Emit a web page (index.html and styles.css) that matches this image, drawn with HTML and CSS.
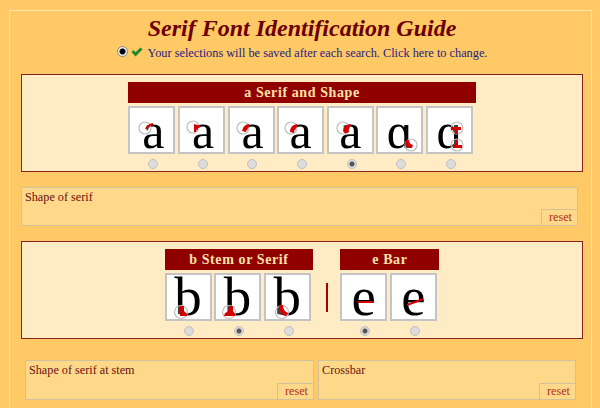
FILE: index.html
```html
<!DOCTYPE html>
<html lang="en">
<head>
    <meta charset="UTF-8" />
    <title>Serif Font Identification Guide</title>
    <link rel="stylesheet" href="styles.css">
</head>
<body>
    <div class="page">
        <h1 class="title">Serif Font Identification Guide</h1>
        <div class="saved">
            <input type="radio" class="saveRadio" checked>
            <svg class="check" viewBox="0 0 12 10"><path d="M0.5 5 L2.5 3 L4.5 5.2 L9.5 0.5 L11.5 2.5 L4.5 9.5 Z" fill="#1f8a2a"/></svg>
            <a href="#">Your selections will be saved after each search. Click here to change.</a>
        </div>

        <div class="panel">
            <div class="group">
                <div class="groupHead">a Serif and Shape</div>
                <div class="options">
                    <label class="option">
                        <span class="thumb nudge">a
                            <svg viewBox="0 0 47 50"><circle cx="17" cy="23" r="6"/><path class="mark" d="M18 24 Q20 20 25 19" /></svg>
                        </span>
                        <input type="radio" name="a">
                    </label>
                    <label class="option">
                        <span class="thumb nudge">a
                            <svg viewBox="0 0 47 50"><circle cx="15" cy="22" r="6"/><path class="fill" d="M16 19 L23 21 L21 23 L19 23 L18 27 L16 27 Z"/></svg>
                        </span>
                        <input type="radio" name="a">
                    </label>
                    <label class="option">
                        <span class="thumb nudge">a
                            <svg viewBox="0 0 47 50"><circle cx="15" cy="23" r="6"/><path class="fill" d="M14 26 Q15 20 21 19 L22 22 Q19 22 18 27 Z"/></svg>
                        </span>
                        <input type="radio" name="a">
                    </label>
                    <label class="option">
                        <span class="thumb">a
                            <svg viewBox="0 0 47 50"><circle cx="14" cy="23" r="6"/><path class="fill" d="M13 27 Q13 20 20 19 L21 22 Q17 22 17 28 Z"/></svg>
                        </span>
                        <input type="radio" name="a">
                    </label>
                    <label class="option">
                        <span class="thumb">a
                            <svg viewBox="0 0 47 50"><circle cx="16" cy="23" r="6"/><path class="fill" d="M16 26 Q16 21 23 19 L24 21 Q21 23 22 27 Q18 30 16 26 Z"/></svg>
                        </span>
                        <input type="radio" name="a" checked>
                    </label>
                    <label class="option">
                        <span class="thumb">&#593;
                            <svg viewBox="0 0 47 50"><circle cx="35" cy="40" r="6"/><path class="fill" d="M30 35 L33 35 Q33 39 37 40 L36 43 Q30 43 29 39 Z"/></svg>
                        </span>
                        <input type="radio" name="a">
                    </label>
                    <label class="option">
                        <span class="thumb">&#593;
                            <svg viewBox="0 0 47 50"><circle cx="31" cy="23" r="6"/><circle cx="31" cy="40" r="6"/><path class="fill" d="M25 22 L35 22 L35 25 L32 25 L32 29 L29 29 L29 25 L25 25 Z M29 35 L32 35 L32 40 L36 40 L36 43 L27 43 L27 40 L29 40 Z"/></svg>
                        </span>
                        <input type="radio" name="a">
                    </label>
                </div>
            </div>
        </div>

        <div class="notes">
            <div class="note">Shape of serif<a class="reset" href="#">reset</a></div>
        </div>

        <div class="panel">
            <div class="group">
                <div class="groupHead">b Stem or Serif</div>
                <div class="options">
                    <label class="option">
                        <span class="thumb tall">b
                            <svg viewBox="0 0 47 50"><circle cx="16" cy="39" r="6.5"/><path class="fill" d="M15 33 L19 33 L19 38 L22 41 L22 43 L15 43 Z"/></svg>
                        </span>
                        <input type="radio" name="b">
                    </label>
                    <label class="option">
                        <span class="thumb tall">b
                            <svg viewBox="0 0 47 50"><circle cx="15" cy="39" r="6.5"/><path class="fill" d="M15 33 L19 33 L19 38 L21 41 L21 43 L10 43 L11 40 Q15 39 15 33 Z"/></svg>
                        </span>
                        <input type="radio" name="b" checked>
                    </label>
                    <label class="option">
                        <span class="thumb tall">b
                            <svg viewBox="0 0 47 50"><circle cx="18" cy="39" r="6.5"/><path class="fill" d="M15 32 L19 32 Q19 38 24 40 L22 43 Q15 42 15 32 Z"/></svg>
                        </span>
                        <input type="radio" name="b">
                    </label>
                </div>
            </div>
            <div class="divider"></div>
            <div class="group">
                <div class="groupHead">e Bar</div>
                <div class="options">
                    <label class="option">
                        <span class="thumb tall">e
                            <svg viewBox="0 0 47 50"><path class="line" d="M18 29 L34 29"/></svg>
                        </span>
                        <input type="radio" name="e" checked>
                    </label>
                    <label class="option">
                        <span class="thumb tall">e
                            <svg viewBox="0 0 47 50"><path class="line" d="M17 32 L33 26"/></svg>
                        </span>
                        <input type="radio" name="e">
                    </label>
                </div>
            </div>
        </div>

        <div class="notes notesTwo">
            <div class="note">Shape of serif at stem<a class="reset" href="#">reset</a></div>
            <div class="note">Crossbar<a class="reset" href="#">reset</a></div>
        </div>
    </div>
</body>
</html>
```

FILE: styles.css
```css
html, body {
    height: 408px;
    overflow: hidden;
}
body {
    background-color: #ffc965;
    font-family: "Liberation Serif", serif;
    margin: 0;
    padding: 10px 8px 0 9px;
    box-sizing: border-box;
    color: #6b0f0f;
}
.page {
    border: 1px solid #ffe3ad;
    border-bottom: none;
    height: 398px;
    box-sizing: border-box;
    padding: 0 8px 0 11px;
}
.title {
    color: #6b0000;
    font-size: 24px;
    font-style: italic;
    font-weight: bold;
    text-align: center;
    line-height: 28px;
    margin: 3px 0 2px 0;
}
.saved {
    display: flex;
    align-items: center;
    justify-content: center;
    height: 18px;
    font-size: 12.3px;
}
.saved a {
    color: #2a1a80;
    text-decoration: none;
    margin-left: 5px;
}
.check {
    width: 12px;
    height: 10px;
    margin-left: 3px;
    margin-bottom: 3px;
}
input[type="radio"] {
    appearance: none;
    -webkit-appearance: none;
    width: 10px;
    height: 10px;
    margin: 0;
    border-radius: 50%;
    border: 1px solid #c0c0c0;
    background: #dcdcdc;
}
input[type="radio"]:checked {
    background: radial-gradient(circle, #555 0 2px, #dcdcdc 3px);
}
input.saveRadio {
    width: 11px;
    height: 11px;
    margin-bottom: 3px;
}
input.saveRadio:checked {
    background: radial-gradient(circle, #000 0 2.5px, #eee 3.5px);
    border-color: #888;
}
.panel {
    background-color: #ffebc4;
    border: 1px solid #8b2020;
    height: 89px;
    margin-top: 15px;
    display: flex;
    justify-content: center;
    padding-top: 7px;
}
.saved + .panel {
    margin-top: 12px;
}
.group {
    display: flex;
    flex-direction: column;
}
.groupHead {
    background-color: #900000;
    color: #ffe3a8;
    font-size: 14px;
    font-weight: bold;
    letter-spacing: 0.6px;
    text-align: center;
    height: 21px;
    line-height: 21px;
}
.options {
    display: flex;
    margin-top: 3px;
}
.option {
    display: flex;
    flex-direction: column;
    align-items: center;
    gap: 5px;
    width: 49.6px;
}
.thumb {
    position: relative;
    display: block;
    width: 43px;
    height: 44px;
    border: 2px solid #c4c4c4;
    margin-right: 2.6px;
    background: #fff;
    color: #000;
    font-size: 50px;
    line-height: 47px;
    text-align: center;
}
.thumb.nudge {
    text-indent: 3px;
}
.thumb.tall {
    font-size: 55px;
    line-height: 43px;
}
.thumb svg {
    position: absolute;
    top: -3px;
    left: -2px;
    width: 47px;
    height: 50px;
}
.thumb.tall svg {
    top: -2px;
}
.thumb circle {
    fill: rgba(255, 255, 255, 0.25);
    stroke: #bdbdbd;
    stroke-width: 1.2;
}
.mark, .line {
    fill: none;
    stroke: #d40000;
    stroke-width: 2;
}
.fill {
    fill: #d40000;
}
.divider {
    width: 2px;
    height: 29px;
    background: #a80000;
    margin: 34px 12px 0 13px;
}
.notes {
    margin-top: 15px;
    display: flex;
    padding-right: 5px;
}
.notesTwo {
    margin-top: 21px;
    gap: 4px;
    padding-left: 4px;
    padding-right: 7px;
}
.note {
    position: relative;
    flex: 1;
    height: 33px;
    background-color: #ffd88a;
    border: 1px solid #d2c29a;
    font-size: 12.2px;
    padding: 2px 3px;
}
.notesTwo .note {
    height: 34px;
}
.notesTwo .note:first-child {
    flex: 0 0 281px;
}
.reset {
    position: absolute;
    right: 0;
    bottom: 0;
    border-top: 1px solid #d2c29a;
    border-left: 1px solid #d2c29a;
    color: #b5301a;
    text-decoration: none;
    padding: 0 5px 0 7px;
    line-height: 15px;
}
```
